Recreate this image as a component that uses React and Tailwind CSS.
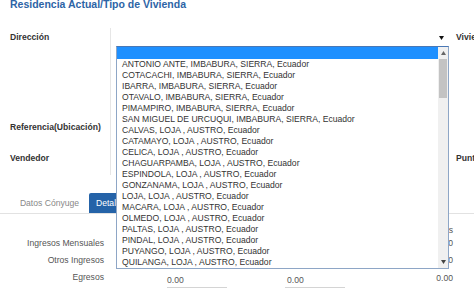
const options = [
  'ANTONIO ANTE, IMBABURA, SIERRA, Ecuador',
  'COTACACHI, IMBABURA, SIERRA, Ecuador',
  'IBARRA, IMBABURA, SIERRA, Ecuador',
  'OTAVALO, IMBABURA, SIERRA, Ecuador',
  'PIMAMPIRO, IMBABURA, SIERRA, Ecuador',
  'SAN MIGUEL DE URCUQUI, IMBABURA, SIERRA, Ecuador',
  'CALVAS, LOJA , AUSTRO, Ecuador',
  'CATAMAYO, LOJA , AUSTRO, Ecuador',
  'CELICA, LOJA , AUSTRO, Ecuador',
  'CHAGUARPAMBA, LOJA , AUSTRO, Ecuador',
  'ESPINDOLA, LOJA , AUSTRO, Ecuador',
  'GONZANAMA, LOJA , AUSTRO, Ecuador',
  'LOJA, LOJA , AUSTRO, Ecuador',
  'MACARA, LOJA , AUSTRO, Ecuador',
  'OLMEDO, LOJA , AUSTRO, Ecuador',
  'PALTAS, LOJA , AUSTRO, Ecuador',
  'PINDAL, LOJA , AUSTRO, Ecuador',
  'PUYANGO, LOJA , AUSTRO, Ecuador',
  'QUILANGA, LOJA , AUSTRO, Ecuador',
];

const Caret = ({ up }) => (
  <svg width="5" height="4" viewBox="0 0 5 4" className="block">
    <path d={up ? 'M0 4 L2.5 0 L5 4 Z' : 'M0 0 L5 0 L2.5 4 Z'} fill="currentColor" />
  </svg>
);

const Dropdown = () => {
  return (
    <div className="absolute left-[116px] top-[46px] w-[333px] h-[223px] border border-[#8ea6c6] border-t-[#4a78b5] bg-white flex overflow-hidden">
      <div className="flex-1">
        <div className="h-[12px] bg-[#1e90ff]"></div>
        {options.map((o) => (
          <div key={o} className="h-[11px] leading-[11px] text-[8.6px] text-[#333] pl-[5px] whitespace-nowrap">
            {o}
          </div>
        ))}
      </div>
      <div className="w-[10px] bg-[#f0f0f0] flex flex-col items-center">
        <div className="h-[12px] flex items-center justify-center text-[#666]">
          <Caret up />
        </div>
        <div className="w-[8px] h-[39px] bg-[#c3c3c3]"></div>
        <div className="flex-1"></div>
        <div className="h-[12px] flex items-center justify-center text-[#444]">
          <Caret />
        </div>
      </div>
    </div>
  );
};

export default function App() {
  return (
    <div className="relative w-[474px] h-[288px] overflow-hidden bg-white font-['Liberation_Sans',Arial,sans-serif] text-[8.6px] text-[#333]">
      <div className="px-[10px] -mt-[2px] h-[12px] leading-[12px] text-[10.5px] font-bold text-[#2d64a6] whitespace-nowrap">
        Residencia Actual/Tipo de Vivienda
      </div>

      {/* datos de residencia */}
      <div className="mt-[18px] grid grid-cols-[110px_340px_1fr]">
        <div className="h-[20px] pl-[10px] leading-[18px] font-bold">Dirección</div>
        <div className="h-[20px] border-l border-[#e6e6e6] flex items-center justify-end pr-[6px] text-[#111]">
          <Caret />
        </div>
        <div className="h-[20px] pl-[6px] leading-[18px] font-bold whitespace-nowrap">Vivienda</div>

        <div className="h-[97px] pl-[10px] flex items-end pb-[9px]">
          <span className="leading-[18px] font-bold whitespace-nowrap">Referencia(Ubicación)</span>
        </div>
        <div className="h-[97px] border-l border-[#e6e6e6]"></div>
        <div></div>

        <div className="h-[30px] pl-[10px] leading-[26px] font-bold">Vendedor</div>
        <div className="h-[30px] border-l border-[#e6e6e6]"></div>
        <div className="h-[30px] pl-[6px] leading-[26px] font-bold whitespace-nowrap">Punto de Venta</div>
      </div>

      {/* tabs */}
      <div className="mt-[18px] flex border-b border-[#e2e2e2] px-[10px]">
        <div className="w-[79px] h-[20px] leading-[20px] text-center text-[#888]">Datos Cónyuge</div>
        <div className="h-[20px] leading-[20px] px-[7px] bg-[#2563a8] text-white rounded-t-[2px]">Detalle Financiero</div>
      </div>

      {/* ingresos / egresos */}
      <div className="mt-[11px] grid grid-cols-[104px_181px_70px_1fr] text-[#555]">
        <div className="h-[10px]"></div>
        <div></div>
        <div></div>
        <div className="h-[10px] leading-[10px] text-right pr-[21px]">Totales</div>

        <div className="h-[17px] leading-[17px] text-right whitespace-nowrap">Ingresos Mensuales</div>
        <div className="leading-[17px] pl-[63px]">0.00</div>
        <div className="leading-[17px] pl-[2px]">0.00</div>
        <div className="leading-[17px] text-right pr-[21px]">0.00</div>

        <div className="h-[17px] leading-[17px] text-right">Otros Ingresos</div>
        <div className="leading-[17px] pl-[63px]">0.00</div>
        <div className="leading-[17px] pl-[2px]">0.00</div>
        <div className="leading-[17px] text-right pr-[21px]">0.00</div>

        <div className="h-[17px] leading-[17px] text-right">Egresos</div>
        <div className="pt-[6px] leading-[10px] pl-[63px]">
          0.00
          <div className="mt-[2px] w-[60px] h-[4px] bg-[#d4d4d4]"></div>
        </div>
        <div className="pt-[6px] leading-[10px]">
          <div className="pl-[2px]">0.00</div>
          <div className="mt-[2px] w-[60px] h-[4px] bg-[#d4d4d4]"></div>
        </div>
        <div className="leading-[17px] pt-[1px] text-right pr-[21px]">0.00</div>
      </div>

      <Dropdown />
    </div>
  );
}
